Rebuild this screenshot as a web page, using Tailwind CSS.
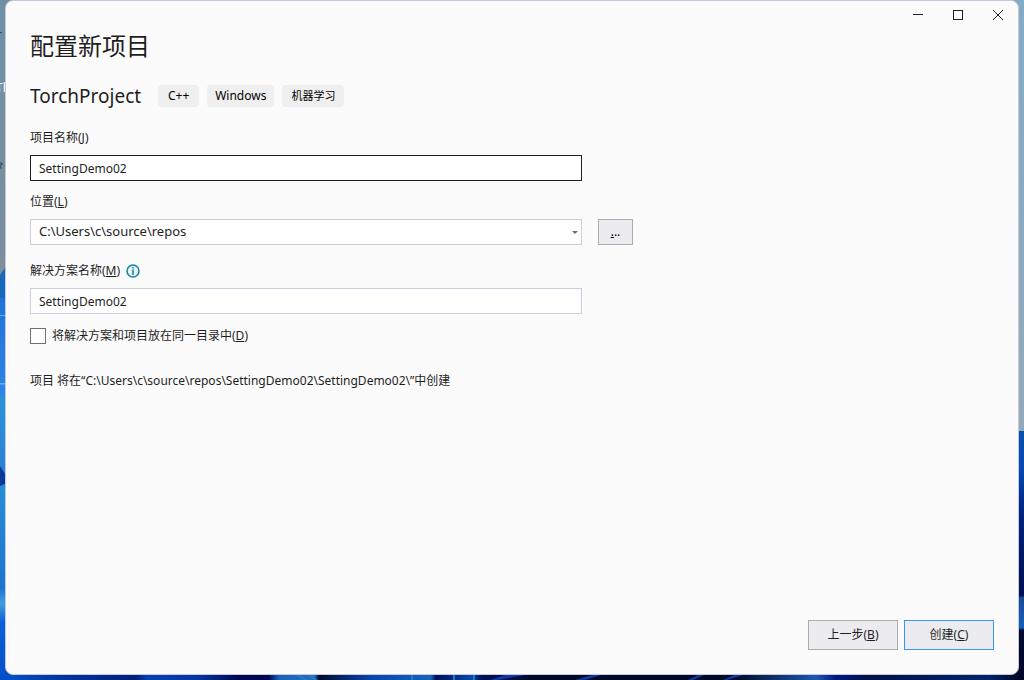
<!DOCTYPE html>
<html lang="zh-CN">
<head>
    <meta charset="UTF-8">
    <meta name="viewport" content="width=device-width, initial-scale=1.0">
    <title>配置新项目</title>
    <script src="https://cdn.jsdelivr.net/npm/@tailwindcss/browser@4"></script>
</head>
<body class="relative flex min-h-screen overflow-hidden bg-[#00103f] px-[5px] pb-[5px] font-['Noto_Sans','Noto_Sans_CJK_SC',sans-serif] text-[12px] text-[#1e1e1e]">
    <!-- Desktop behind the window -->
    <svg class="absolute inset-0 h-full w-full" viewBox="0 0 1024 680" preserveAspectRatio="none" aria-hidden="true">
        <defs>
            <linearGradient id="sky" x1="0" y1="0" x2="0" y2="1">
                <stop offset="0" stop-color="#6e90a6"/>
                <stop offset="1" stop-color="#7d8f9c"/>
            </linearGradient>
            <linearGradient id="left" x1="0" y1="0" x2="0" y2="1">
                <stop offset="0" stop-color="#1f74da"/>
                <stop offset="0.25" stop-color="#2d84e4"/>
                <stop offset="0.26" stop-color="#2993da"/>
                <stop offset="0.47" stop-color="#2a80d8"/>
                <stop offset="0.48" stop-color="#2590d8"/>
                <stop offset="0.76" stop-color="#1c74d0"/>
                <stop offset="0.8" stop-color="#3f9fe0"/>
                <stop offset="0.85" stop-color="#0b60d8"/>
                <stop offset="1" stop-color="#0450c8"/>
            </linearGradient>
            <linearGradient id="rsky" x1="0" y1="0" x2="0" y2="1">
                <stop offset="0" stop-color="#84abc6"/>
                <stop offset="1" stop-color="#94a9b8"/>
            </linearGradient>
            <linearGradient id="right" x1="0" y1="0" x2="0" y2="1">
                <stop offset="0" stop-color="#0a50b0"/>
                <stop offset="0.15" stop-color="#0548b0"/>
                <stop offset="0.35" stop-color="#00207a"/>
                <stop offset="0.66" stop-color="#000f50"/>
                <stop offset="0.67" stop-color="#1a4a98"/>
                <stop offset="0.79" stop-color="#1460b8"/>
                <stop offset="0.8" stop-color="#000a30"/>
                <stop offset="1" stop-color="#000828"/>
            </linearGradient>
            <linearGradient id="bottom" x1="0" y1="0" x2="1" y2="0">
                <stop offset="0" stop-color="#0450c8"/>
                <stop offset="0.05" stop-color="#0038a0"/>
                <stop offset="0.13" stop-color="#00207a"/>
                <stop offset="0.14" stop-color="#0840b0"/>
                <stop offset="0.19" stop-color="#0536a0"/>
                <stop offset="0.23" stop-color="#000850"/>
                <stop offset="0.26" stop-color="#000850"/>
                <stop offset="0.27" stop-color="#1a60b8"/>
                <stop offset="0.305" stop-color="#2070c0"/>
                <stop offset="0.31" stop-color="#000a30"/>
                <stop offset="0.36" stop-color="#0844a8"/>
                <stop offset="0.41" stop-color="#1260b8"/>
                <stop offset="0.42" stop-color="#1c60b8"/>
                <stop offset="0.425" stop-color="#001058"/>
                <stop offset="0.46" stop-color="#0848b0"/>
                <stop offset="0.47" stop-color="#001058"/>
                <stop offset="0.52" stop-color="#000a28"/>
                <stop offset="0.72" stop-color="#000a28"/>
                <stop offset="0.8" stop-color="#1c58b0"/>
                <stop offset="0.82" stop-color="#001880"/>
                <stop offset="0.85" stop-color="#001048"/>
                <stop offset="0.97" stop-color="#002468"/>
                <stop offset="1" stop-color="#000828"/>
            </linearGradient>
        </defs>
        <rect width="20" height="300" fill="url(#sky)"/>
        <path d="M0 275 5 268V300H0z" fill="#1668b8"/>
        <rect y="298" width="20" height="382" fill="url(#left)"/>
        <path d="M0 466 5 474V484L0 486z" fill="#0c3a98"/>
        <path d="M0 383h5v1.500H0zM0 315h5v1H0z" fill="#4cc0e8"/>
        <rect x="1004" width="20" height="431" fill="url(#rsky)"/>
        <rect x="1004" y="431" width="20" height="249" fill="url(#right)"/>
        <rect x="5" y="664" width="1014" height="16" fill="url(#bottom)"/>
        <path d="M498 680 525 675H505L490 680zM585 680 601 675H592L575 680zM693 680 704 675H698L688 680zM727 680 743 675H734L723 680z" fill="#1238a0"/>
        <path d="M303 680 296 675H301L307 680zM314 680 308 675H313L317 680zM411 680V675H413V680zM453 680V675H455V680zM473 680V675H475V680z" fill="#2878c0"/>
        <path d="M0 32.500h2M0 163h2v2H0v3h2" stroke="#3c4650" fill="none"/>
    </svg>
    <span class="absolute top-20 -left-1 leading-4 text-white">Th</span>

    <main class="relative flex flex-1 flex-col rounded-lg border border-[#c5c8dc] bg-[#fbfbfb]">
        <!-- Caption buttons -->
        <div class="flex h-7 justify-end">
            <button type="button" aria-label="最小化" class="flex w-10 items-center justify-center">
                <svg class="h-[10px] w-[10px]" viewBox="0 0 10 10" shape-rendering="crispEdges"><path d="M0 4h10v1H0z" fill="#1e1e1e"/></svg>
            </button>
            <button type="button" aria-label="最大化" class="flex w-10 items-center justify-center">
                <svg class="h-[10px] w-[10px]" viewBox="0 0 10 10" shape-rendering="crispEdges"><path d="M.5.5h9v9h-9z" fill="none" stroke="#1e1e1e"/></svg>
            </button>
            <button type="button" aria-label="关闭" class="flex w-10 items-center justify-center">
                <svg class="h-[10px] w-[10px]" viewBox="0 0 10 10"><path d="M0 0 10 10M10 0 0 10" fill="none" stroke="#1e1e1e"/></svg>
            </button>
        </div>

        <form class="flex flex-1 flex-col px-6 pb-6">
            <h1 class="font-['Noto_Sans_CJK_SC'] text-[24px] leading-8 font-normal">配置新项目</h1>

            <div class="mt-[21px] flex items-center gap-2">
                <h2 class="mr-[9px] text-[19px] leading-7">TorchProject</h2>
                <span class="min-w-[41px] rounded bg-[#efeff0] px-2 text-center leading-[22px] text-black">C++</span>
                <span class="rounded bg-[#efeff0] px-2 leading-[22px] text-black">Windows</span>
                <span class="rounded bg-[#efeff0] px-[9px] text-[11px] leading-[22px] text-black">机器学习</span>
            </div>

            <label for="projectName" class="mt-[18px] leading-5">项目名称(<u>J</u>)</label>
            <input type="text" id="projectName" value="SettingDemo02"
                class="mt-[7px] h-[26px] w-full max-w-[552px] border border-[#1e1e1e] bg-white px-2 focus:outline-none">

            <label for="location" class="mt-[11px] leading-5">位置(<u>L</u>)</label>
            <div class="mt-[7px] flex gap-4">
                <div class="relative w-full max-w-[552px]">
                    <select id="location" class="h-[26px] w-full appearance-none border border-[#ccccdc] bg-white px-2 text-[13px] focus:outline-none">
                        <option>C:\Users\c\source\repos</option>
                    </select>
                    <svg class="pointer-events-none absolute top-3 right-1 h-[3px] w-[6px]" viewBox="0 0 6 3"><path d="M0 0h6L3 3z" fill="#717171"/></svg>
                </div>
                <button type="button" class="h-[26px] w-[35px] shrink-0 border border-[#acacac] bg-[#ececf0] text-black"><u>.</u>..</button>
            </div>

            <div class="mt-4 flex items-center gap-[6px]">
                <label for="solutionName" class="leading-5">解决方案名称(<u>M</u>)</label>
                <svg class="h-[14px] w-[14px]" viewBox="0 0 14 14" role="img" aria-label="信息">
                    <circle cx="7" cy="7" r="6" fill="#e3f1f5" stroke="#17819f" stroke-width="1.500"/>
                    <path d="M6.250 3h1.500v1.500h-1.500zM6.250 5.500h1.500V11h-1.500z" fill="#17819f"/>
                </svg>
            </div>
            <input type="text" id="solutionName" value="SettingDemo02"
                class="mt-[7px] h-[26px] w-full max-w-[552px] border border-[#ccccdc] bg-white px-2 focus:outline-none">

            <div class="mt-3 flex items-center gap-[6px]">
                <input type="checkbox" id="sameDir" class="h-4 w-4 appearance-none border border-[#717171] bg-white checked:bg-[#717171]">
                <label for="sameDir" class="leading-5">将解决方案和项目放在同一目录中(<u>D</u>)</label>
            </div>

            <p class="mt-[25px] leading-5">项目 将在“C:\Users\c\source\repos\SettingDemo02\SettingDemo02\”中创建</p>

            <div class="mt-auto flex justify-end gap-[6px]">
                <button type="button" class="h-[30px] w-[90px] border border-[#acacac] bg-[#ececf0]">上一步(<u>B</u>)</button>
                <button type="submit" class="h-[30px] w-[90px] border border-[#3399ff] bg-[#ececf0]">创建(<u>C</u>)</button>
            </div>
        </form>
    </main>
</body>
</html>
